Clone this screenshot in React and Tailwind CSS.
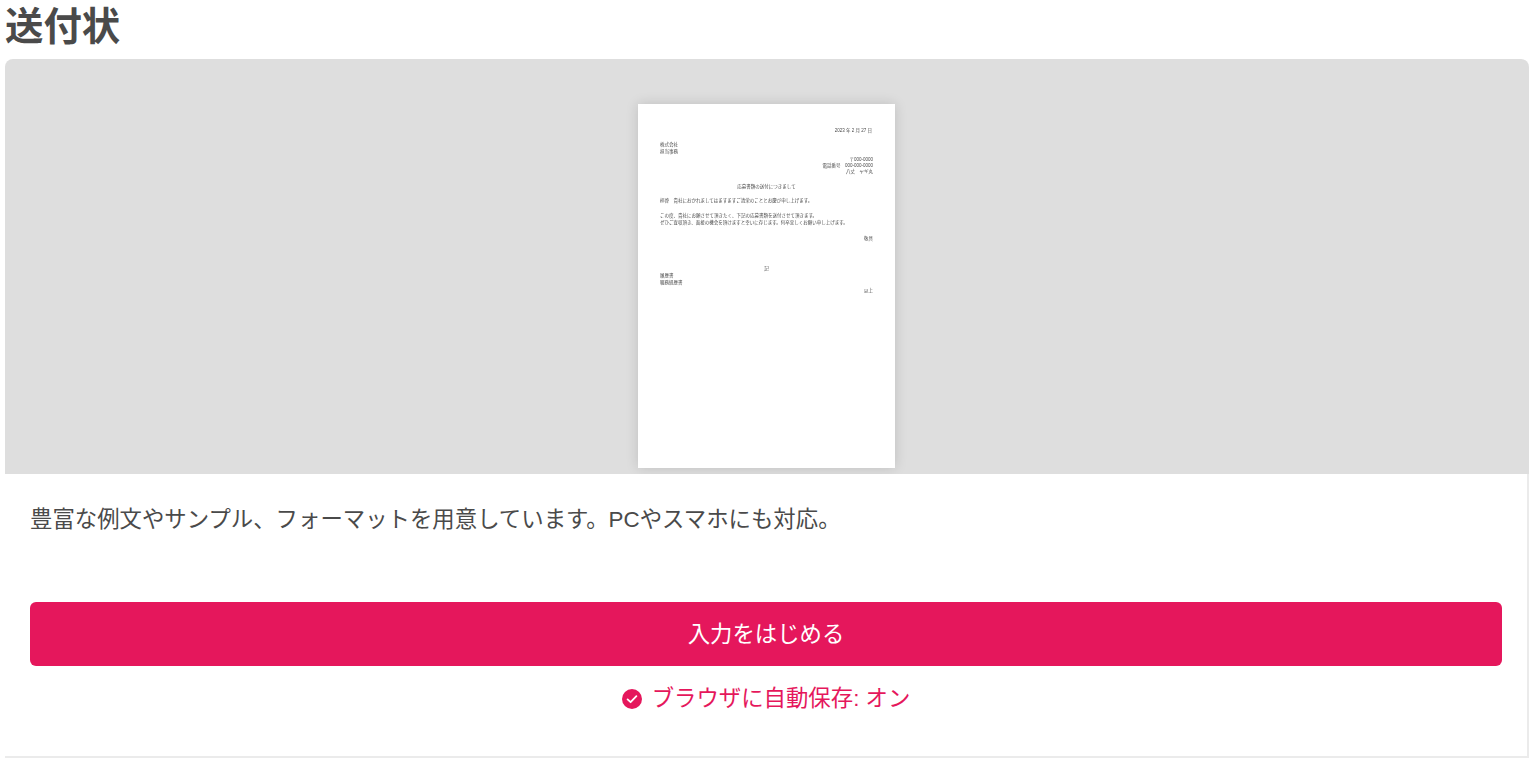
const font = { fontFamily: '"Liberation Sans", "Noto Sans CJK JP", sans-serif' };

function Letter() {
  return (
    <div className="w-[257px] h-[364px] bg-white shadow-[0_0_12px_rgba(0,0,0,0.14)] pt-[23px] pl-[22px] pr-[22px] text-[4.5px] leading-[7px] text-[#4a4a4a] blur-[0.25px]">
      <p className="text-right pr-px">2023 年 2 月 27 日</p>
      <div className="mt-[7px]">
        <p>株式会社</p>
        <p>担当事務</p>
      </div>
      <div className="mt-px text-right">
        <p>〒000-0000</p>
        <p className="-mt-px">電話番号　000-000-0000</p>
        <p className="-mt-px">八丈　ヤギ丸</p>
      </div>
      <p className="mt-[8px] text-center">応募書類の送付につきまして</p>
      <p className="mt-[7px]">拝啓　貴社におかれましてはますますご清栄のこととお慶び申し上げます。</p>
      <div className="mt-[8px]">
        <p>この度、貴社にお願させて頂きたく、下記の応募書類を送付させて頂きます。</p>
        <p>ぜひご査収頂き、面接の機会を頂けますと幸いに存じます。何卒宜しくお願い申し上げます。</p>
      </div>
      <p className="mt-[9px] text-right">敬具</p>
      <p className="mt-[23px] text-center">記</p>
      <p>履歴書</p>
      <p>職務経歴書</p>
      <p className="mt-px text-right">以上</p>
    </div>
  );
}

export default function App() {
  return (
    <div className="min-h-[762px] bg-white pl-[5px] pr-[7px] text-[#4a4a4a]" style={font}>
      <h1 className="h-[59px] pt-[4px] text-[38.4px] leading-[46px] font-bold">送付状</h1>
      <div className="rounded-t-lg overflow-hidden">
        <div className="h-[415px] bg-[#dedede] flex justify-center pt-[45px] overflow-hidden">
          <div className="-ml-px">
            <Letter />
          </div>
        </div>
        <div className="h-[284px] pl-[25px] pr-[25px] border-r-2 border-b-2 border-[#ebebeb]">
          <p className="h-[128px] pt-[29px] text-[22.4px] leading-[34px]">
            豊富な例文やサンプル、フォーマットを用意しています。PCやスマホにも対応。
          </p>
          <button className="w-full h-[64px] pt-[2px] bg-[#e5175c] rounded-md text-white text-[22.4px]">入力をはじめる</button>
          <div className="mt-[16px] flex items-center justify-center gap-[10px] text-[22.4px] leading-[34px] text-[#e5175c]">
            <svg viewBox="0 0 20 20" className="w-5 h-5">
              <circle cx="10" cy="10" r="10" fill="#e5175c" />
              <path d="M5.6 10.4 8.6 13.2 14.4 7.2" fill="none" stroke="white" strokeWidth="1.8" strokeLinecap="round" strokeLinejoin="round" />
            </svg>
            <span>ブラウザに自動保存: オン</span>
          </div>
        </div>
      </div>
    </div>
  );
}
